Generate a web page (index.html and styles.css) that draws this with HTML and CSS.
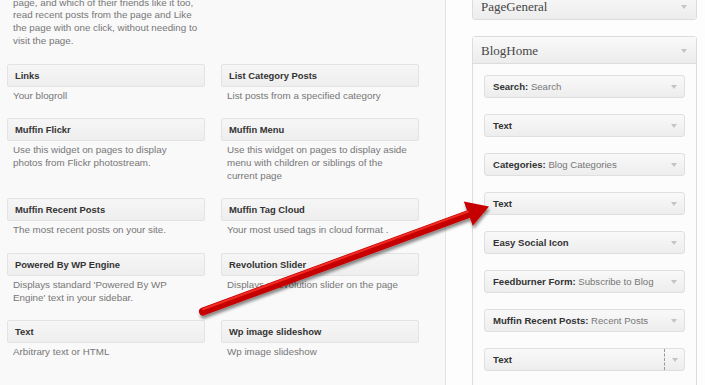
FILE: index.html
```html
<!DOCTYPE html>
<html>
<head>
<meta charset="utf-8">
<link rel="stylesheet" href="styles.css">
</head>
<body>
<div class="page">
  <section class="available">
    <div class="grid">
      <div class="widget">
        <p class="desc lead">page, and which of their friends like it too,<br>read recent posts from the page and Like<br>the page with one click, without needing to<br>visit the page.</p>
      </div>
      <div class="widget"></div>

      <div class="widget">
        <div class="title">Links</div>
        <p class="desc">Your blogroll</p>
      </div>
      <div class="widget">
        <div class="title">List Category Posts</div>
        <p class="desc">List posts from a specified category</p>
      </div>

      <div class="widget">
        <div class="title">Muffin Flickr</div>
        <p class="desc">Use this widget on pages to display<br>photos from Flickr photostream.</p>
      </div>
      <div class="widget">
        <div class="title">Muffin Menu</div>
        <p class="desc">Use this widget on pages to display aside<br>menu with children or siblings of the<br>current page</p>
      </div>

      <div class="widget">
        <div class="title">Muffin Recent Posts</div>
        <p class="desc">The most recent posts on your site.</p>
      </div>
      <div class="widget">
        <div class="title">Muffin Tag Cloud</div>
        <p class="desc">Your most used tags in cloud format .</p>
      </div>

      <div class="widget">
        <div class="title">Powered By WP Engine</div>
        <p class="desc">Displays standard 'Powered By WP<br>Engine' text in your sidebar.</p>
      </div>
      <div class="widget">
        <div class="title">Revolution Slider</div>
        <p class="desc">Displays a revolution slider on the page</p>
      </div>

      <div class="widget">
        <div class="title">Text</div>
        <p class="desc">Arbitrary text or HTML</p>
      </div>
      <div class="widget">
        <div class="title">Wp image slideshow</div>
        <p class="desc">Wp image slideshow</p>
      </div>
    </div>
  </section>

  <section class="sidebars">
    <div class="sb closed">
      <div class="sb-head"><span>PageGeneral</span><i class="tri"></i></div>
    </div>
    <div class="sb">
      <div class="sb-head"><span>BlogHome</span><i class="tri"></i></div>
      <div class="sb-body">
        <div class="w"><div class="w-title">Search: <span>Search</span></div><div class="w-toggle"><i class="tri"></i></div></div>
        <div class="w"><div class="w-title">Text</div><div class="w-toggle"><i class="tri"></i></div></div>
        <div class="w"><div class="w-title">Categories: <span>Blog Categories</span></div><div class="w-toggle"><i class="tri"></i></div></div>
        <div class="w"><div class="w-title">Text</div><div class="w-toggle"><i class="tri"></i></div></div>
        <div class="w"><div class="w-title">Easy Social Icon</div><div class="w-toggle"><i class="tri"></i></div></div>
        <div class="w"><div class="w-title">Feedburner Form: <span>Subscribe to Blog</span></div><div class="w-toggle"><i class="tri"></i></div></div>
        <div class="w"><div class="w-title">Muffin Recent Posts: <span>Recent Posts</span></div><div class="w-toggle"><i class="tri"></i></div></div>
        <div class="w"><div class="w-title">Text</div><div class="w-toggle sep"><i class="tri"></i></div></div>
      </div>
    </div>
  </section>
</div>

<svg class="arrow" width="705" height="385" viewBox="0 0 705 385">
  <defs>
    <filter id="sh" x="-10%" y="-30%" width="120%" height="160%">
      <feDropShadow dx="1" dy="3" stdDeviation="1.8" flood-color="#000" flood-opacity="0.45"/>
    </filter>
  </defs>
  <g filter="url(#sh)">
    <line x1="203" y1="311.5" x2="470" y2="213.5" stroke="#c60000" stroke-width="8" stroke-linecap="round"/>
    <polygon points="489,206.5 463.8,201.4 472.8,225.8" fill="#c60000"/>
  </g>
  <line x1="203" y1="309.2" x2="468" y2="211.6" stroke="#ff3b30" stroke-width="2" stroke-linecap="round" opacity="0.75"/>
</svg>
</body>
</html>
```

FILE: styles.css
```css
* { box-sizing: border-box; }

html, body {
  margin: 0;
  padding: 0;
}

body {
  width: 705px;
  height: 385px;
  overflow: hidden;
  position: relative;
  background: #fdfdfd;
  font-family: "Liberation Sans", Arial, sans-serif;
}

.page {
  display: flex;
  height: 385px;
}

/* available widgets */
.available {
  width: 446px;
  flex: none;
  background: #f9f9f9;
  border-right: 1px solid #e3e3e3;
  padding-left: 7px;
}

.grid {
  display: grid;
  grid-template-columns: 198px 198px;
  column-gap: 16px;
  row-gap: 16px;
  align-items: start;
}

.title {
  height: 23px;
  border: 1px solid #e3e3e3;
  border-radius: 2px;
  background: linear-gradient(#f6f6f6, #eeeeee);
  padding-left: 7px;
  font-weight: bold;
  font-size: 9.4px;
  line-height: 21px;
  color: #333;
}

.desc {
  margin: 3px 0 0;
  padding-left: 6px;
  font-size: 9.8px;
  line-height: 12.7px;
  color: #777;
  white-space: nowrap;
}

.desc.lead {
  margin-top: -3.3px;
}

/* sidebars */
.sidebars {
  flex: 1;
  padding-left: 26px;
  margin-top: -8px;
}

.sb {
  width: 225px;
  border: 1px solid #dcdcdc;
  border-radius: 3px;
  background: #fcfcfc;
  margin-bottom: 16px;
}

.sb-head {
  height: 26px;
  display: flex;
  align-items: center;
  justify-content: space-between;
  padding: 2px 9px 0 8px;
  background: linear-gradient(#f9f9f9, #ececec);
  font-family: "Liberation Serif", "DejaVu Serif", serif;
  font-size: 13px;
  color: #464646;
}

.sb .sb-head + .sb-body {
  border-top: 1px solid #dcdcdc;
}

.sb-body {
  padding: 11px 11px 20px;
  display: flex;
  flex-direction: column;
  gap: 16px;
}

.w {
  height: 23px;
  display: flex;
  align-items: center;
  border: 1px solid #dfdfdf;
  border-radius: 3px;
  background: linear-gradient(#f9f9f9, #ededed);
  font-size: 9.6px;
  color: #333;
}

.w-title {
  flex: 1;
  padding-left: 8px;
  font-weight: bold;
  white-space: nowrap;
}

.w-title span {
  font-weight: normal;
  color: #777;
}

.w-toggle {
  width: 20px;
  align-self: stretch;
  display: flex;
  align-items: center;
  justify-content: center;
}

.w-toggle.sep {
  border-left: 1px dashed #9a9a9a;
}

.tri {
  display: block;
  width: 0;
  height: 0;
  border-left: 3px solid transparent;
  border-right: 3px solid transparent;
  border-top: 4px solid #c4c4c4;
}

.arrow {
  position: absolute;
  left: 0;
  top: 0;
  pointer-events: none;
}
```
